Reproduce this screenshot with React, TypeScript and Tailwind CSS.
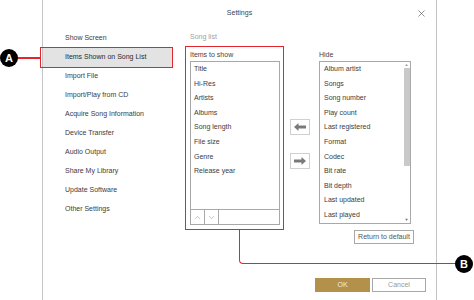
import { ChevronDown, ChevronUp, X } from 'lucide-react';

const NAV = [
  'Show Screen',
  'Items Shown on Song List',
  'Import File',
  'Import/Play from CD',
  'Acquire Song Information',
  'Device Transfer',
  'Audio Output',
  'Share My Library',
  'Update Software',
  'Other Settings'
];

const SHOWN = ['Title', 'Hi-Res', 'Artists', 'Albums', 'Song length', 'File size', 'Genre', 'Release year'];

const HIDDEN = [
  'Album artist',
  'Songs',
  'Song number',
  'Play count',
  'Last registered',
  'Format',
  'Codec',
  'Bit rate',
  'Bit depth',
  'Last updated',
  'Last played'
];

function ArrowButton({ dir }: { dir: 'left' | 'right' }) {
  return (
    <div className="flex h-[16px] w-[20px] items-center justify-center border border-[#d0d0d0] bg-white">
      <svg width="12" height="8" viewBox="0 0 12 8">
        {dir === 'left' ? (
          <path d="M0 4 L4.5 0 L4.5 2.6 L12 2.6 L12 5.4 L4.5 5.4 L4.5 8 Z" fill="#7a7a7a" />
        ) : (
          <path d="M12 4 L7.5 0 L7.5 2.6 L0 2.6 L0 5.4 L7.5 5.4 L7.5 8 Z" fill="#7a7a7a" />
        )}
      </svg>
    </div>
  );
}

function Badge({ letter }: { letter: string }) {
  return (
    <div className="flex h-[18px] w-[18px] items-center justify-center rounded-full bg-black text-[11px] font-bold leading-none text-white">
      {letter}
    </div>
  );
}

export default function App() {
  return (
    <div className="relative h-[300px] w-[474px] overflow-hidden bg-white font-['Liberation_Sans',Arial,sans-serif] text-[7px] text-[#3c3c3c]">
      <div className="ml-[42px] flex h-[300px] w-[395px] flex-col border-x border-[#c4c4c4]">
        <div className="grid h-[27px] grid-cols-[1fr_auto_1fr] items-center">
          <div />
          <div className="text-[#444]">Settings</div>
          <div className="flex justify-end pr-[9px]">
            <X size={11} strokeWidth={1.4} color="#555" />
          </div>
        </div>

        <div className="flex flex-1 pt-[2px]">
          <div className="w-[130px]">
            {NAV.map((item, i) => (
              <div
                key={item}
                className={
                  'flex h-[19px] items-center pl-[22px] ' + (i === 1 ? 'bg-[#e3e3e3] text-[#2a2a2a]' : '')
                }
              >
                {item}
              </div>
            ))}
          </div>

          <div className="-mt-[1px] flex-1 pl-[17px]">
            <div className="flex h-[19px] items-center text-[#a0a0a0]">Song list</div>

            <div className="flex">
              <div className="flex flex-col">
                <div className="flex h-[14px] items-center pt-[3px] text-[#444]">Items to show</div>
                <div className="flex h-[164px] w-[90px] flex-col border border-[#a8a8a8]">
                  <div className="flex-1 pl-[3px]">
                    {SHOWN.map((s) => (
                      <div key={s} className="flex h-[14.6px] items-center">
                        {s}
                      </div>
                    ))}
                  </div>
                  <div className="flex h-[15px] border-t border-[#a8a8a8]">
                    <div className="flex w-[14px] items-center justify-center border-r border-[#a8a8a8]">
                      <ChevronUp size={9} strokeWidth={1.3} color="#888" />
                    </div>
                    <div className="flex w-[14px] items-center justify-center border-r border-[#a8a8a8]">
                      <ChevronDown size={9} strokeWidth={1.3} color="#888" />
                    </div>
                  </div>
                </div>
              </div>

              <div className="ml-[10px] flex flex-col">
                <div className="mt-[72px]">
                  <ArrowButton dir="left" />
                </div>
                <div className="mt-[18px]">
                  <ArrowButton dir="right" />
                </div>
              </div>

              <div className="ml-[9px] flex flex-col items-end">
                <div className="flex h-[14px] items-center self-start pt-[3px] text-[#444]">Hide</div>
                <div className="flex h-[163px] w-[92px] border border-[#a8a8a8]">
                  <div className="flex-1 pl-[4px]">
                    {HIDDEN.map((s) => (
                      <div key={s} className="flex h-[14.6px] items-center">
                        {s}
                      </div>
                    ))}
                  </div>
                  <div className="flex w-[7px] flex-col items-center">
                    <div className="flex h-[5px] items-center text-[4px] leading-none text-[#999]">▲</div>
                    <div className="mt-[1px] h-[98px] w-[6px] bg-[#c9c9c9]" />
                    <div className="flex-1" />
                    <div className="flex h-[6px] items-center text-[4px] leading-none text-[#666]">▼</div>
                  </div>
                </div>
                <div className="-mr-[3px] mt-[6px] flex h-[14px] w-[60px] items-center justify-center border border-[#a8a8a8] text-[#555]">
                  Return to default
                </div>
              </div>
            </div>

            <div className="mt-[34px] flex justify-end gap-[2px] pr-[10px]">
              <div className="flex h-[14px] w-[55px] items-center justify-center bg-[#b3914a] text-[#f5ecd8]">OK</div>
              <div className="flex h-[14px] w-[54px] items-center justify-center border border-[#a8a8a8] text-[#999]">
                Cancel
              </div>
            </div>
          </div>
        </div>
      </div>

      {/* annotations */}
      <div className="absolute left-[40px] top-[47px] h-[21px] w-[133px] border-[1.5px] border-[#e2262c]" />
      <div className="absolute left-[17px] top-[57px] h-[1.5px] w-[23px] bg-[#e2262c]" />
      <div className="absolute left-0 top-[49px]">
        <Badge letter="A" />
      </div>

      <div className="absolute left-[185px] top-[46px] h-[184px] w-[99px] border-[1.5px] border-[#e2262c]" />
      <div className="absolute left-[239px] top-[229px] h-[35px] w-[218px] rounded-bl-[4px] border-b-[1.5px] border-l-[1.5px] border-[#e2262c]" />
      <div className="absolute left-[455px] top-[255px]">
        <Badge letter="B" />
      </div>
    </div>
  );
}
